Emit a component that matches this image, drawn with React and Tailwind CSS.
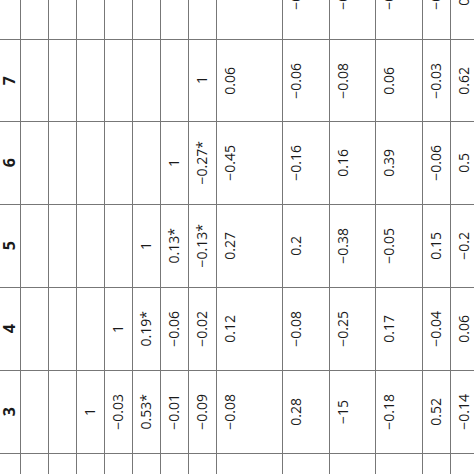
const rows = [
  { label: "8", h: "h-[95px] -mt-[55px]", cells: ["", "", "", "", "", "", "", "1", "−0.07", "−0.04", "−0.02", "−0.05", "0.08"] },
  { label: "7", h: "h-[82px]", cells: ["", "", "", "", "", "", "1", "0.06", "−0.06", "−0.08", "0.06", "−0.03", "0.62"] },
  { label: "6", h: "h-[83px]", cells: ["", "", "", "", "", "1", "−0.27*", "−0.45", "−0.16", "0.16", "0.39", "−0.06", "0.5"] },
  { label: "5", h: "h-[83px]", cells: ["", "", "", "", "1", "0.13*", "−0.13*", "0.27", "0.2", "−0.38", "−0.05", "0.15", "−0.2"] },
  { label: "4", h: "h-[83px]", cells: ["", "", "", "1", "0.19*", "−0.06", "−0.02", "0.12", "−0.08", "−0.25", "0.17", "−0.04", "0.06"] },
  { label: "3", h: "h-[83px]", cells: ["", "", "1", "−0.03", "0.53*", "−0.01", "−0.09", "−0.08", "0.28", "−15", "−0.18", "0.52", "−0.14"] },
  { label: "", h: "h-[83px]", cells: ["", "", "", "", "", "", "", "", "", "", "", "", ""] },
];

function App() {
  return (
    <div className="w-[474px] h-[474px] overflow-hidden bg-white font-['Open_Sans',sans-serif] text-[#1a1a1a]">
      {/* rotated correlation table, columns run down the page */}
      {rows.map((row, r) => (
        <div
          key={r}
          className={`grid grid-cols-[20px_repeat(7,28px)_66px_47px_46px_47px_28px_60px] ${row.h}`}
        >
          <div className="flex items-center pl-[1px] border-b border-[#777]">
            <span className="[writing-mode:vertical-rl] rotate-180 leading-none text-[16px] font-bold">
              {row.label}
            </span>
          </div>
          {row.cells.map((val, i) => (
            <div
              key={i}
              className="flex items-center pl-[6px] border-b border-l border-[#777]"
            >
              {val && (
                <span className="[writing-mode:vertical-rl] rotate-180 leading-none text-[14px] whitespace-nowrap">
                  {val}
                </span>
              )}
            </div>
          ))}
        </div>
      ))}
    </div>
  );
}

export default App;
